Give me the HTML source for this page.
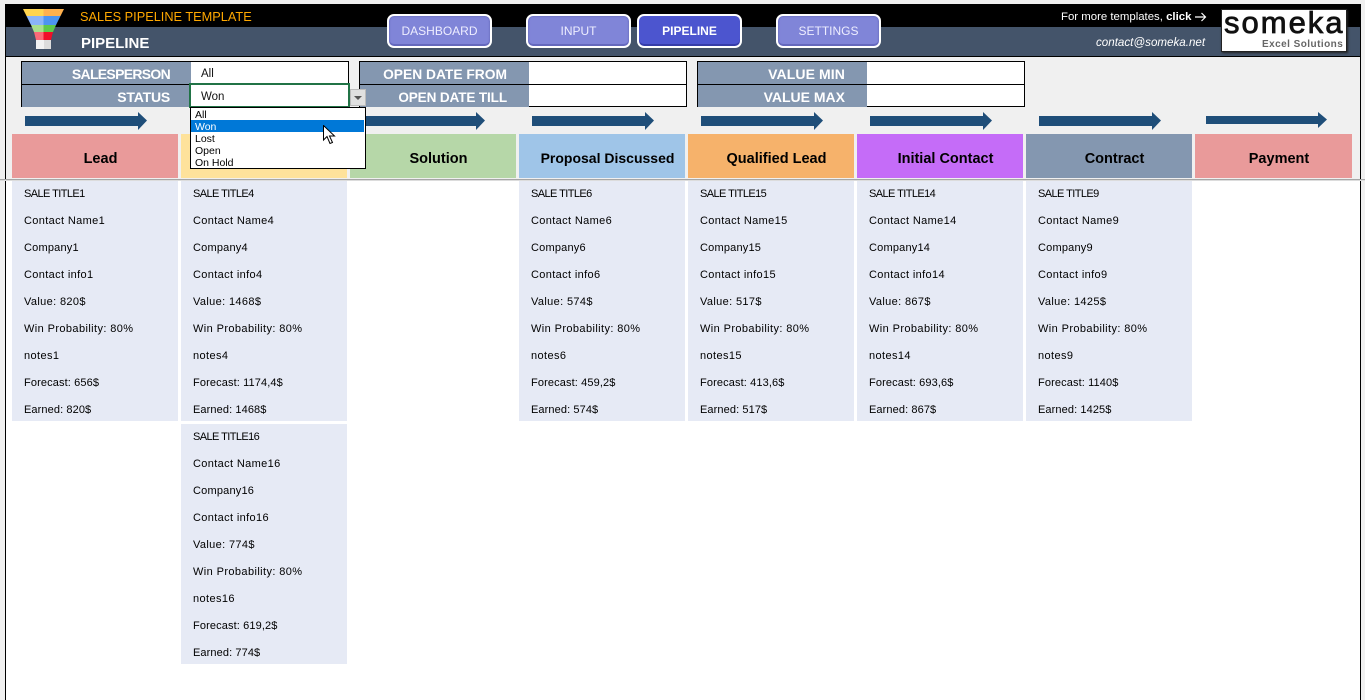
<!DOCTYPE html>
<html><head><meta charset="utf-8"><style>
html,body{margin:0;padding:0}
body{width:1365px;height:700px;position:relative;overflow:hidden;background:#f0f0f0;font-family:"Liberation Sans",sans-serif;color:#111}
div{position:absolute;box-sizing:border-box;white-space:nowrap}
.btn{top:14px;height:34px;width:105px;border:2.5px solid #fff;border-radius:7px;background:#8085d8;color:#eef;font-size:12px;line-height:31px;text-align:center;box-shadow:inset 0 -2px 0 #6569bd,inset 0 0 2px #5a5eb0}
.fb{height:46px;width:328px;top:61px;border:1px solid #000;background:#fff}
.lb{left:0;width:169px;height:22px;background:#8497b0;color:#fff;font-weight:bold;font-size:14px;line-height:25px;text-align:right;padding-right:22px}
.ln{left:0;right:0;top:22px;height:1px;background:#000}
.h{top:134px;height:44px;font-weight:bold;font-size:14.5px;line-height:50px;text-align:center;color:#000;padding-left:11px}
.c{width:166px;background:#e6eaf5;height:240px;padding:0 0 0 12px;font-size:11px;color:#000}
.c p{margin:0;height:27px;line-height:27px}
.c p:nth-child(1){letter-spacing:-.58px}
.c p:nth-child(2){letter-spacing:.36px}
.c p:nth-child(3){letter-spacing:.2px}
.c p:nth-child(4){letter-spacing:.36px}
.c p:nth-child(5){letter-spacing:.36px}
.c p:nth-child(6){letter-spacing:.4px}
.c p:nth-child(7){letter-spacing:.4px}
.c p:nth-child(8){letter-spacing:.12px}
.c p:nth-child(9){letter-spacing:.1px}
</style></head><body>
<div style="left:5px;top:180px;width:1356px;height:520px;background:#fff"></div>
<div style="left:5px;top:4px;width:1356px;height:23px;background:#000"></div>
<div style="left:5px;top:27px;width:1356px;height:29px;background:#44546a"></div>
<div style="left:5px;top:56px;width:1356px;height:1px;background:#000"></div>
<div style="left:5px;top:4px;width:1px;height:696px;background:#000"></div>
<div style="left:1360px;top:4px;width:1px;height:696px;background:#000"></div>

<svg style="position:absolute;left:20px;top:6px" width="48" height="46" viewBox="20 6 48 46">
<polygon points="23,9 43.5,9 43.5,16 26.5,16" fill="#ffd54f"/><polygon points="43.5,9 64,9 60.5,16 43.5,16" fill="#ffb14e"/>
<polygon points="26.5,16 43.5,16 43.5,25 31,25" fill="#8ab4f8"/><polygon points="43.5,16 60.5,16 56,25 43.5,25" fill="#4d94f0"/>
<polygon points="31,25 43.5,25 43.5,32 34,32" fill="#a9df8c"/><polygon points="43.5,25 56,25 53,32 43.5,32" fill="#5fc94a"/>
<polygon points="34,32 43.5,32 43.5,40 36,40" fill="#fb6a78"/><polygon points="43.5,32 53,32 51,40 43.5,40" fill="#f00f28"/>
<rect x="36" y="40" width="8" height="9" fill="#f2f2f2"/><rect x="44" y="40" width="7" height="9" fill="#dcdcdc"/>
</svg>
<div style="left:80px;top:8px;font-size:12.75px;line-height:18px;color:#ffa800">SALES PIPELINE TEMPLATE</div>
<div style="left:81px;top:34px;font-size:15px;line-height:20px;font-weight:bold;color:#fff">PIPELINE</div>

<div class="btn" style="left:387px">DASHBOARD</div>
<div class="btn" style="left:526px">INPUT</div>
<div class="btn" style="left:637px;background:#4c55cf;color:#fff;font-weight:bold;box-shadow:inset 0 -2px 0 #363da8">PIPELINE</div>
<div class="btn" style="left:776px">SETTINGS</div>

<div style="left:1061px;top:9px;font-size:11.4px;line-height:16px;color:#fff">For more templates, <b>click</b></div>
<svg style="position:absolute;left:1195px;top:12px" width="12" height="10" viewBox="0 0 12 10"><path d="M0 5H10.500M6.500 1L10.500 5 6.500 9" fill="none" stroke="#fff" stroke-width="1.200"/></svg>
<div style="left:1096px;top:35px;font-size:11.6px;line-height:16px;font-style:italic;color:#fff">contact@someka.net</div>
<div style="left:1221px;top:9px;width:126px;height:43px;background:#fff;border:1px solid #222;box-shadow:1px 1px 2px #222"></div>
<div style="left:1224px;top:3px;font-size:31px;line-height:40px;color:#111;letter-spacing:2px;-webkit-text-stroke:.8px #111">someka</div>
<div style="left:1262px;top:38px;font-size:10px;line-height:13px;font-weight:bold;color:#666;letter-spacing:.45px">Excel Solutions</div>

<div class="fb" style="left:21px"><div class="lb" style="letter-spacing:-.7px;padding-right:21px">SALESPERSON</div><div class="lb" style="top:23px;letter-spacing:-.2px;padding-right:21px">STATUS</div><div class="ln"></div><div style="left:179px;top:3px;font-size:11.5px;line-height:19px">All</div></div>
<div class="fb" style="left:359px"><div class="lb" style="font-size:13.8px">OPEN DATE FROM</div><div class="lb" style="top:23px;font-size:13.6px;letter-spacing:-.15px">OPEN DATE TILL</div><div class="ln"></div></div>
<div class="fb" style="left:697px"><div class="lb" style="letter-spacing:.1px">VALUE MIN</div><div class="lb" style="top:23px">VALUE MAX</div><div class="ln"></div></div>

<svg style="position:absolute;left:0;top:108px" width="1365" height="26" viewBox="0 108 1365 26" fill="#1f4e79">
<polygon points="25,116 138,116 138,112 147,120.500 138,130 138,126 25,126"/>
<polygon points="363,116 476,116 476,112 485,120.500 476,130 476,126 363,126"/>
<polygon points="532,116 645,116 645,112 654,120.500 645,130 645,126 532,126"/>
<polygon points="701,116 814,116 814,112 823,120.500 814,130 814,126 701,126"/>
<polygon points="870,116 983,116 983,112 992,120.500 983,130 983,126 870,126"/>
<polygon points="1039,116 1152,116 1152,112 1161,120.500 1152,130 1152,126 1039,126"/>
<polygon points="1206,116 1318,116 1318,112 1327,119.500 1318,128 1318,124 1206,124"/>
</svg>

<div class="h" style="left:12px;width:166px;background:#e99a9a">Lead</div>
<div class="h" style="left:181px;width:166px;background:#fee29b"></div>
<div class="h" style="left:350px;width:166px;background:#b6d7a8">Solution</div>
<div class="h" style="left:519px;width:166px;background:#9fc5e8;font-size:14px;line-height:49px">Proposal Discussed</div>
<div class="h" style="left:688px;width:166px;background:#f6b26b">Qualified Lead</div>
<div class="h" style="left:857px;width:166px;background:#c56cf8">Initial Contact</div>
<div class="h" style="left:1026px;width:166px;background:#8497b0">Contract</div>
<div class="h" style="left:1195px;width:157px;background:#e99a9a">Payment</div>

<div style="left:0;top:179px;width:1365px;height:1px;background:#a6a6a6"></div>
<div style="left:0;top:180px;width:1365px;height:1px;background:#dcdcdc"></div>

<div class="c" style="left:12px;top:181px"><p>SALE TITLE1</p><p>Contact Name1</p><p>Company1</p><p>Contact info1</p><p>Value: 820$</p><p>Win Probability: 80%</p><p>notes1</p><p>Forecast: 656$</p><p>Earned: 820$</p></div>
<div class="c" style="left:181px;top:181px"><p>SALE TITLE4</p><p>Contact Name4</p><p>Company4</p><p>Contact info4</p><p>Value: 1468$</p><p>Win Probability: 80%</p><p>notes4</p><p>Forecast: 1174,4$</p><p>Earned: 1468$</p></div>
<div class="c" style="left:181px;top:424px"><p>SALE TITLE16</p><p>Contact Name16</p><p>Company16</p><p>Contact info16</p><p>Value: 774$</p><p>Win Probability: 80%</p><p>notes16</p><p>Forecast: 619,2$</p><p>Earned: 774$</p></div>
<div class="c" style="left:519px;top:181px"><p>SALE TITLE6</p><p>Contact Name6</p><p>Company6</p><p>Contact info6</p><p>Value: 574$</p><p>Win Probability: 80%</p><p>notes6</p><p>Forecast: 459,2$</p><p>Earned: 574$</p></div>
<div class="c" style="left:688px;top:181px"><p>SALE TITLE15</p><p>Contact Name15</p><p>Company15</p><p>Contact info15</p><p>Value: 517$</p><p>Win Probability: 80%</p><p>notes15</p><p>Forecast: 413,6$</p><p>Earned: 517$</p></div>
<div class="c" style="left:857px;top:181px"><p>SALE TITLE14</p><p>Contact Name14</p><p>Company14</p><p>Contact info14</p><p>Value: 867$</p><p>Win Probability: 80%</p><p>notes14</p><p>Forecast: 693,6$</p><p>Earned: 867$</p></div>
<div class="c" style="left:1026px;top:181px"><p>SALE TITLE9</p><p>Contact Name9</p><p>Company9</p><p>Contact info9</p><p>Value: 1425$</p><p>Win Probability: 80%</p><p>notes9</p><p>Forecast: 1140$</p><p>Earned: 1425$</p></div>

<div style="left:189px;top:83px;width:161px;height:25px;border:2px solid #217346;background:#fff"></div>
<div style="left:201px;top:89px;font-size:11.5px;line-height:17px">Won</div>
<div style="left:350px;top:89px;width:16px;height:17px;background:#e0e0e0;border:1px solid #bbb"></div>
<div style="left:354px;top:96px;width:0;height:0;border:4px solid transparent;border-top:4px solid #555;border-bottom:0"></div>

<div style="left:190px;top:107px;width:176px;height:62px;background:#fff;border:1px solid #000"></div>
<div style="left:191px;top:120px;width:173px;height:12px;background:#0078d7"></div>
<div style="left:195px;top:109px;font-size:10.5px;line-height:12px;color:#000">All</div>
<div style="left:195px;top:121px;font-size:10.5px;line-height:12px;color:#fff">Won</div>
<div style="left:195px;top:133px;font-size:10.5px;line-height:12px;color:#000">Lost</div>
<div style="left:195px;top:145px;font-size:10.5px;line-height:12px;color:#000">Open</div>
<div style="left:195px;top:157px;font-size:10.5px;line-height:12px;color:#000">On Hold</div>
<svg style="position:absolute;left:322px;top:125px" width="15" height="20" viewBox="0 0 15 20"><path d="M1.500 .5V15L5 11.500 8 18.500 10.500 17.500 7.500 11H12.500Z" fill="#fff" stroke="#000" stroke-width="1"/></svg>
</body></html>
